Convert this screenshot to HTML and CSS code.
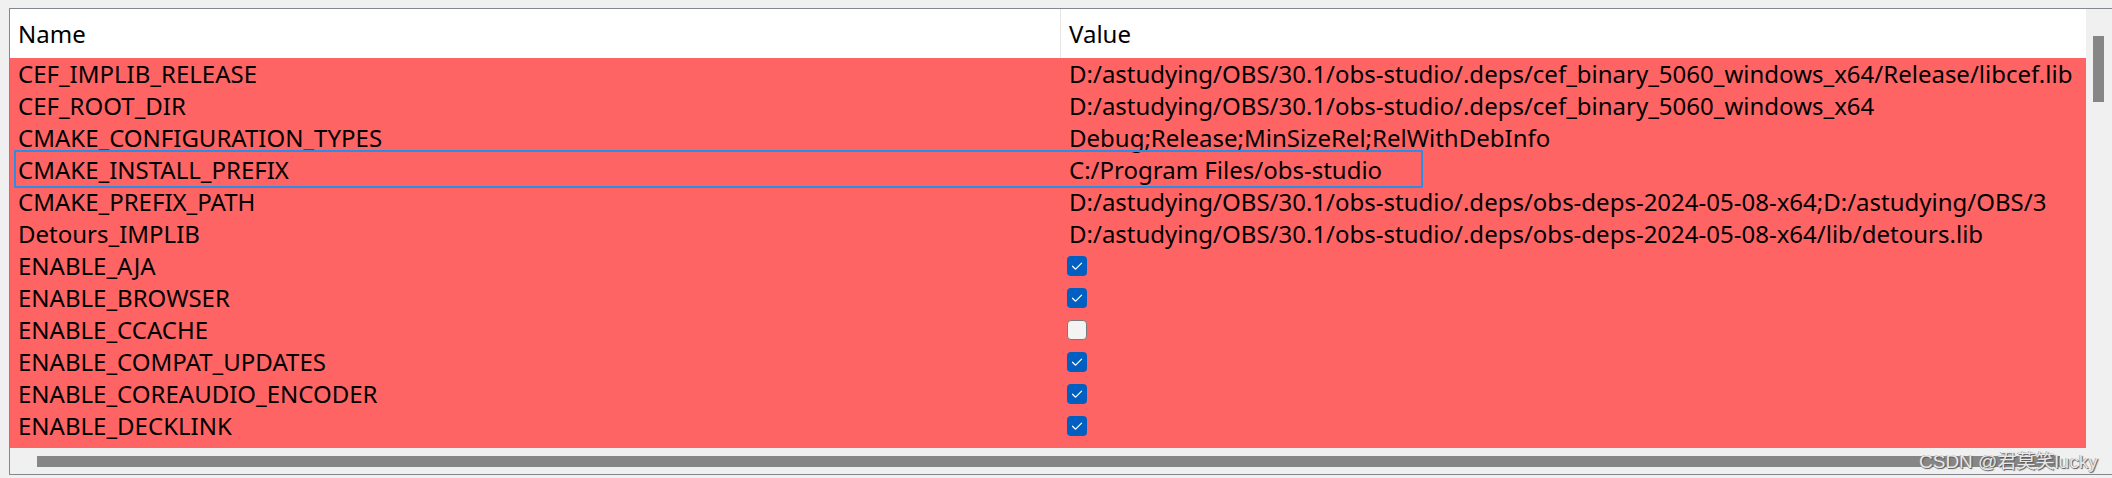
FILE: index.html
```html
<!DOCTYPE html>
<html>
<head>
<meta charset="utf-8">
<link rel="stylesheet" href="styles.css">
</head>
<body>
<div class="frame">
  <div class="main">
    <div class="header">
      <div class="hcell name-col">Name</div>
      <div class="hcell value-col">Value</div>
    </div>
    <div class="rows">
      <div class="row"><div class="cell name-col">CEF_IMPLIB_RELEASE</div><div class="cell value-col">D:/astudying/OBS/30.1/obs-studio/.deps/cef_binary_5060_windows_x64/Release/libcef.lib</div></div>
      <div class="row"><div class="cell name-col">CEF_ROOT_DIR</div><div class="cell value-col">D:/astudying/OBS/30.1/obs-studio/.deps/cef_binary_5060_windows_x64</div></div>
      <div class="row"><div class="cell name-col">CMAKE_CONFIGURATION_TYPES</div><div class="cell value-col">Debug;Release;MinSizeRel;RelWithDebInfo</div></div>
      <div class="row selected"><div class="cell name-col">CMAKE_INSTALL_PREFIX</div><div class="cell value-col">C:/Program Files/obs-studio</div><div class="focus"></div></div>
      <div class="row"><div class="cell name-col">CMAKE_PREFIX_PATH</div><div class="cell value-col">D:/astudying/OBS/30.1/obs-studio/.deps/obs-deps-2024-05-08-x64;D:/astudying/OBS/3</div></div>
      <div class="row"><div class="cell name-col">Detours_IMPLIB</div><div class="cell value-col">D:/astudying/OBS/30.1/obs-studio/.deps/obs-deps-2024-05-08-x64/lib/detours.lib</div></div>
      <div class="row"><div class="cell name-col">ENABLE_AJA</div><div class="cell value-col"><span class="cb on"><svg viewBox="0 0 20 20"><path d="M5.5 10.2 L8.6 13.2 L14.6 7.2"/></svg></span></div></div>
      <div class="row"><div class="cell name-col">ENABLE_BROWSER</div><div class="cell value-col"><span class="cb on"><svg viewBox="0 0 20 20"><path d="M5.5 10.2 L8.6 13.2 L14.6 7.2"/></svg></span></div></div>
      <div class="row"><div class="cell name-col">ENABLE_CCACHE</div><div class="cell value-col"><span class="cb off"></span></div></div>
      <div class="row"><div class="cell name-col">ENABLE_COMPAT_UPDATES</div><div class="cell value-col"><span class="cb on"><svg viewBox="0 0 20 20"><path d="M5.5 10.2 L8.6 13.2 L14.6 7.2"/></svg></span></div></div>
      <div class="row"><div class="cell name-col">ENABLE_COREAUDIO_ENCODER</div><div class="cell value-col"><span class="cb on"><svg viewBox="0 0 20 20"><path d="M5.5 10.2 L8.6 13.2 L14.6 7.2"/></svg></span></div></div>
      <div class="row"><div class="cell name-col">ENABLE_DECKLINK</div><div class="cell value-col"><span class="cb on"><svg viewBox="0 0 20 20"><path d="M5.5 10.2 L8.6 13.2 L14.6 7.2"/></svg></span></div></div>
    </div>
  </div>
  <div class="vscroll"><div class="vthumb"></div></div>
  <div class="hscroll"><div class="hthumb"></div></div>
  <div class="corner"></div>
</div>
<div class="watermark">CSDN @君莫笑lucky</div>
</body>
</html>
```
FILE: styles.css
```css
html, body {
  margin: 0;
  padding: 0;
  background: #f0f0f0;
  overflow: hidden;
}
body {
  width: 2112px;
  height: 478px;
  padding: 8px 0 0 9px;
  box-sizing: border-box;
  position: relative;
  font-family: "Noto Sans", "Noto Sans CJK SC", sans-serif;
}
.frame {
  box-sizing: border-box;
  width: 2103px;
  height: 467px;
  border: 1px solid #828790;
  border-right: none;
  display: grid;
  grid-template-columns: 2076px 26px;
  grid-template-rows: 439px 26px;
  background: #f0f0f0;
}
.main {
  overflow: hidden;
  display: flex;
  flex-direction: column;
}
.header {
  height: 49px;
  flex: none;
  background: #fff;
  display: flex;
}
.hcell {
  display: flex;
  align-items: center;
  font-size: 24px;
  color: #000;
  line-height: 1;
}
.name-col {
  width: 1051px;
  flex: none;
  box-sizing: border-box;
  padding-left: 8px;
}
.hcell.name-col {
  border-right: 1px solid #e5e5e5;
}
.value-col {
  flex: 1;
  min-width: 0;
  padding-left: 8px;
  white-space: nowrap;
}
.rows {
  flex: 1;
  background: #ff6464;
  overflow: hidden;
}
.row {
  height: 32px;
  display: flex;
  position: relative;
}
.cell {
  display: flex;
  align-items: center;
  font-size: 24px;
  line-height: 1;
  color: #000;
  white-space: nowrap;
}
.focus {
  position: absolute;
  left: 4px;
  top: -4px;
  width: 1409px;
  height: 38px;
  box-sizing: border-box;
  border: 2px solid #2a8ee6;
  border-radius: 1px;
}
.cb {
  width: 20px;
  height: 20px;
  box-sizing: border-box;
  border-radius: 4px;
  margin-left: -2px;
  display: block;
}
.cb.on {
  background: #005fc0;
}
.cb.on svg {
  width: 20px;
  height: 20px;
  display: block;
}
.cb.on path {
  fill: none;
  stroke: #fff;
  stroke-width: 1.2;
  stroke-linecap: round;
  stroke-linejoin: round;
}
.cb.off {
  background: #f3f3f3;
  border: 1px solid #7a7a7a;
}
.vscroll {
  background: #f0f0f0;
  padding: 27px 0 0 7px;
  box-sizing: border-box;
}
.vthumb {
  width: 11px;
  height: 66px;
  background: #868686;
}
.hscroll {
  background: #f0f0f0;
  padding: 8px 0 0 27px;
  box-sizing: border-box;
}
.hthumb {
  width: 2023px;
  height: 11px;
  background: #868686;
}
.corner {
  background: #f0f0f0;
}
.watermark {
  position: absolute;
  left: 1919px;
  top: 446px;
  font-family: "Liberation Sans", "Noto Sans CJK SC", sans-serif;
  font-size: 19px;
  color: #e8e8e8;
  text-shadow: 1px 1px 1px #555, -0.5px -0.5px 0 #888;
  white-space: nowrap;
}
```
